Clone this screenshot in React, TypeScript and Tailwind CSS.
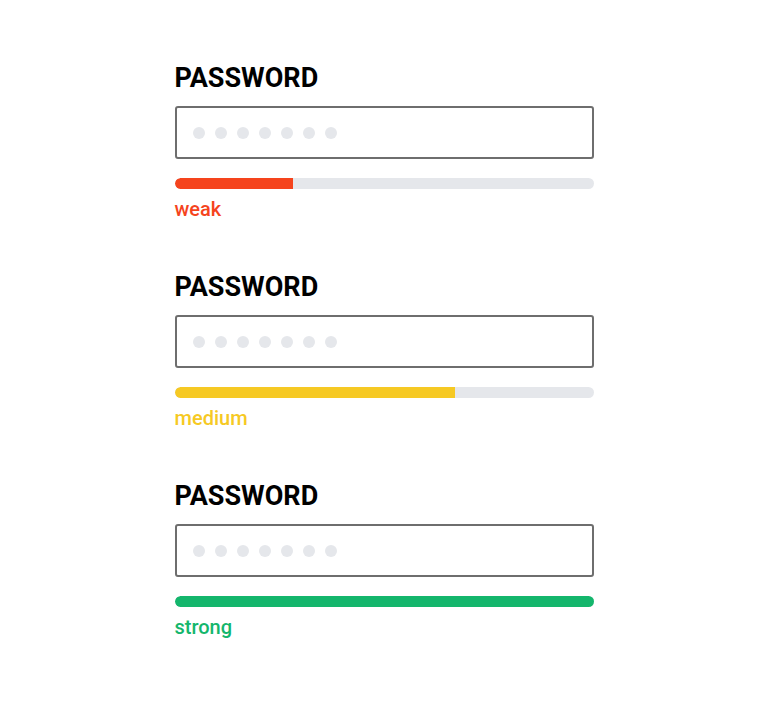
import React from "react";

type Strength = {
  label: string;
  pct: number;
  bar: string;
  text: string;
};

const levels: Strength[] = [
  { label: "weak", pct: 28.4, bar: "bg-[#f5441d]", text: "text-[#f5441d]" },
  { label: "medium", pct: 67, bar: "bg-[#f6c923]", text: "text-[#f6c923]" },
  { label: "strong", pct: 100, bar: "bg-[#14b66c]", text: "text-[#14b66c]" },
];

function PasswordField({ level }: { level: Strength }) {
  return (
    <div className="flex flex-col">
      <div className="text-[27px] leading-[30px] font-bold text-black">PASSWORD</div>
      <div className="mt-[13px] h-[53px] rounded-[3px] border-2 border-[#6e6e6e] bg-white flex items-center pl-[16px] gap-[10px]">
        {Array.from({ length: 7 }).map((_, i) => (
          <span key={i} className="w-[12px] h-[12px] rounded-full bg-[#e5e7eb]" />
        ))}
      </div>
      <div className="mt-[19px] h-[11px] rounded-full bg-[#e5e7eb] overflow-hidden">
        <div className={`h-full ${level.bar} rounded-l-full`} style={{ width: `${level.pct}%` }} />
      </div>
      <div className={`mt-[8px] text-[20px] leading-[24px] font-medium ${level.text}`}>{level.label}</div>
    </div>
  );
}

export default function App() {
  return (
    <div className="w-[768px] h-[705px] bg-white" style={{ fontFamily: "Roboto, 'Liberation Sans', sans-serif" }}>
      <div className="w-[419px] mx-auto pt-[63px] flex flex-col gap-[51px]">
        {levels.map((l) => (
          <PasswordField key={l.label} level={l} />
        ))}
      </div>
    </div>
  );
}
